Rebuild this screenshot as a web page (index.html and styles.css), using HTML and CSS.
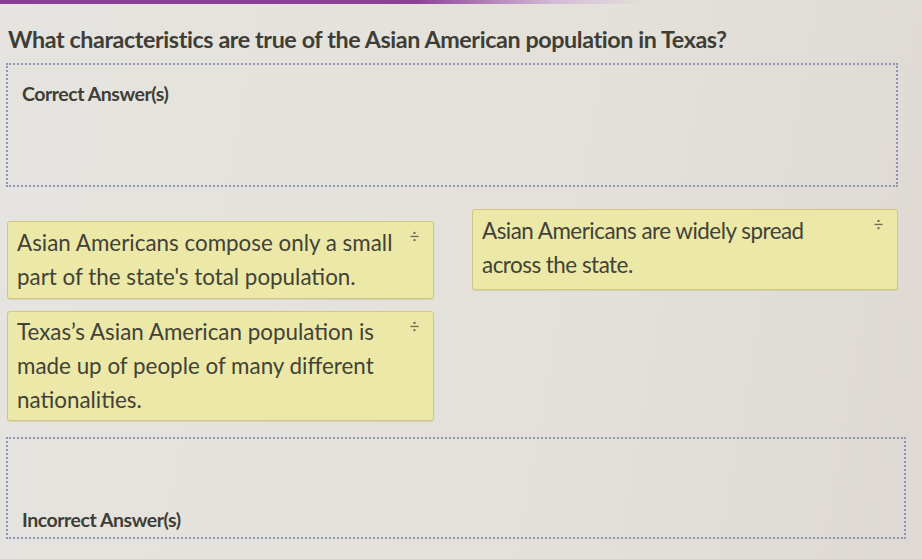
FILE: index.html
```html
<!DOCTYPE html>
<html lang="en">
<head>
<meta charset="utf-8">
<title>Asian American population in Texas</title>
<link rel="stylesheet" href="styles.css">
</head>
<body>
<div class="topbar"></div>
<main class="page">
  <h1 class="question">What characteristics are true of the Asian American population in Texas?</h1>
  <section class="dropzone correct">
    <h2 class="zone-label">Correct Answer(s)</h2>
  </section>
  <div class="cards">
    <div class="card card-a">
      <p>Asian Americans compose only a small part of the state's total population.</p>
      <svg class="handle" viewBox="0 0 10 12" width="9" height="11"><circle cx="5" cy="2" r="1.3"/><rect x="0.5" y="5.2" width="9" height="1.5"/><circle cx="5" cy="10" r="1.3"/></svg>
    </div>
    <div class="card card-b">
      <p>Asian Americans are widely spread across the state.</p>
      <svg class="handle" viewBox="0 0 10 12" width="9" height="11"><circle cx="5" cy="2" r="1.3"/><rect x="0.5" y="5.2" width="9" height="1.5"/><circle cx="5" cy="10" r="1.3"/></svg>
    </div>
    <div class="card card-c">
      <p>Texas’s Asian American population is made up of people of many different nationalities.</p>
      <svg class="handle" viewBox="0 0 10 12" width="9" height="11"><circle cx="5" cy="2" r="1.3"/><rect x="0.5" y="5.2" width="9" height="1.5"/><circle cx="5" cy="10" r="1.3"/></svg>
    </div>
  </div>
  <section class="dropzone incorrect">
    <h2 class="zone-label">Incorrect Answer(s)</h2>
  </section>
</main>
</body>
</html>
```

FILE: styles.css
```css
html, body {
  margin: 0;
  padding: 0;
}
body {
  width: 922px;
  height: 559px;
  overflow: hidden;
  background: linear-gradient(100deg, #e6e4e0 0%, #e4e1da 60%, #dedad3 100%);
  font-family: Lato, "Open Sans", sans-serif;
  color: #45453a;
}
.topbar {
  height: 4px;
  background: linear-gradient(90deg, #8a3c96 0%, #8e3f98 45%, rgba(200,160,210,0.6) 60%, rgba(230,226,220,0) 70%);
}
.page {
  padding: 0 18px 0 6px;
}
.question {
  margin: 20px 0 0 2px;
  font-size: 23.3px;
  font-weight: 700;
  letter-spacing: -0.4px;
  line-height: 30px;
  color: #3e3e36;
}
.dropzone {
  border: 2px dotted #8f96b4;
  box-sizing: border-box;
  display: flex;
  flex-direction: column;
}
.correct {
  margin-top: 9px;
  height: 124px;
  width: 892px;
  padding: 17px 0 0 14px;
}
.incorrect {
  margin-top: 16px;
  height: 102px;
  width: 900px;
  justify-content: flex-end;
  padding: 0 0 5px 14px;
}
.zone-label {
  margin: 0;
  font-size: 19.5px;
  font-weight: 700;
  letter-spacing: -0.45px;
  color: #3e3e36;
  line-height: 24px;
}
.cards {
  margin-top: 34px;
  display: grid;
  grid-template-columns: 427px 426px;
  column-gap: 38px;
  row-gap: 12px;
  align-items: start;
  padding-left: 1px;
}
.card {
  position: relative;
  background: #ece8a7;
  border: 1px solid #d2c77a;
  border-radius: 3px;
  padding: 4px 30px 4px 9px;
  box-shadow: 0 1px 1px rgba(120,110,60,0.15);
}
.card p {
  margin: 0;
  font-size: 22.4px;
  line-height: 34px;
  color: #424237;
}
.card-b {
  margin-top: -12px;
  padding-right: 60px;
  padding-bottom: 7px;
}
.card-b p {
  letter-spacing: -0.5px;
}
.card-c {
  padding-right: 50px;
  padding-top: 3px;
  padding-bottom: 3px;
}
.handle {
  position: absolute;
  top: 9px;
  right: 14px;
  fill: #6e6c5a;
}
```
